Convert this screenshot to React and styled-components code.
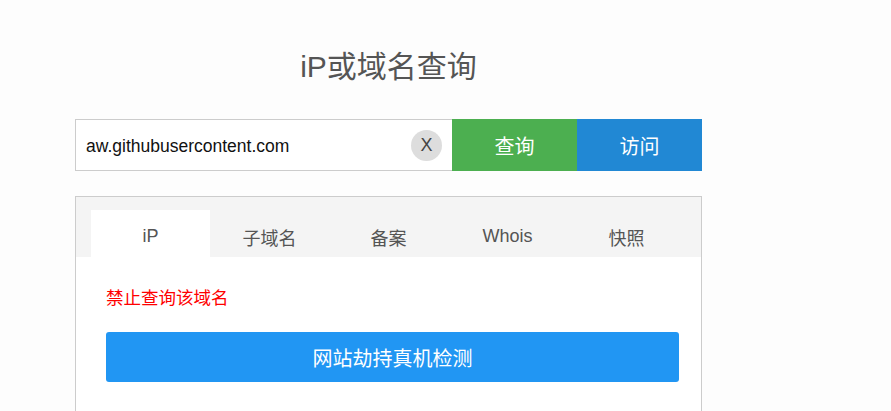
import React, { useState } from "react";
import styled, { createGlobalStyle } from "styled-components";

const GlobalStyle = createGlobalStyle`
  html, body {
    margin: 0;
    padding: 0;
    background: #fdfdfd;
    font-family: "Liberation Sans", Arial, "Noto Sans CJK SC", sans-serif;
  }
`;

const Page = styled.div`
  width: 627px;
  margin-left: 75px;
  padding-top: 46px;
`;

const Title = styled.h1`
  margin: 0 0 32px;
  font-size: 30px;
  font-weight: normal;
  line-height: 41px;
  color: #555;
  text-align: center;
`;

const SearchRow = styled.div`
  display: flex;
  height: 52px;
`;

const InputWrap = styled.div`
  flex: 1;
  display: flex;
  align-items: center;
  border: 1px solid #ccc;
  border-right: none;
  background: #fff;
  padding: 0 10px 0 10px;
`;

const Input = styled.input`
  flex: 1;
  border: none;
  outline: none;
  background: transparent;
  font-family: inherit;
  font-size: 17.5px;
  color: #111;
  padding: 2px 0 0;
`;

const Clear = styled.button`
  width: 31px;
  height: 31px;
  border-radius: 50%;
  border: none;
  background: #ddd;
  color: #444;
  font-family: inherit;
  font-size: 18px;
  padding: 0;
  cursor: pointer;
`;

const ActionButton = styled.button`
  width: 125px;
  border: none;
  background: ${(p) => p.$bg};
  color: #fff;
  font-family: inherit;
  font-size: 20px;
  cursor: pointer;
`;

const Panel = styled.div`
  margin-top: 25px;
  border: 1px solid #ccc;
  height: 260px;
`;

const TabBar = styled.div`
  display: flex;
  background: #f4f4f4;
  padding: 13px 15px 0;
`;

const Tab = styled.div`
  width: 119px;
  height: 47px;
  box-sizing: border-box;
  padding-top: 6px;
  display: flex;
  align-items: center;
  justify-content: center;
  font-size: 18px;
  color: #555;
  background: ${(p) => (p.$active ? "#fff" : "transparent")};
  cursor: pointer;
`;

const Body = styled.div`
  background: #fff;
  padding: 29px 22px 0 30px;
  height: 100%;
`;

const Warning = styled.div`
  color: #f00;
  font-size: 17.5px;
  line-height: 25px;
`;

const BigButton = styled.button`
  display: block;
  width: 100%;
  height: 50px;
  margin-top: 21px;
  border: none;
  border-radius: 3px;
  background: #2196f3;
  color: #fff;
  font-family: inherit;
  font-size: 20px;
  cursor: pointer;
`;

const tabs = ["iP", "子域名", "备案", "Whois", "快照"];

export default function App() {
  const [value, setValue] = useState("aw.githubusercontent.com");
  const [active, setActive] = useState(0);

  return (
    <>
      <GlobalStyle />
      <Page>
        <Title>iP或域名查询</Title>
        <SearchRow>
          <InputWrap>
            <Input value={value} onChange={(e) => setValue(e.target.value)} />
            <Clear onClick={() => setValue("")}>X</Clear>
          </InputWrap>
          <ActionButton $bg="#4caf50">查询</ActionButton>
          <ActionButton $bg="#2188d4">访问</ActionButton>
        </SearchRow>
        <Panel>
          <TabBar>
            {tabs.map((t, i) => (
              <Tab key={t} $active={i === active} onClick={() => setActive(i)}>
                {t}
              </Tab>
            ))}
          </TabBar>
          <Body>
            <Warning>禁止查询该域名</Warning>
            <BigButton>网站劫持真机检测</BigButton>
          </Body>
        </Panel>
      </Page>
    </>
  );
}
